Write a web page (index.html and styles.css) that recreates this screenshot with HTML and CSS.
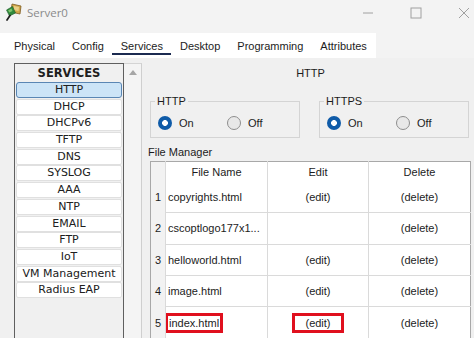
FILE: index.html
```html
<!DOCTYPE html>
<html lang="en">
<head>
<meta charset="utf-8">
<title>Server0</title>
<link rel="stylesheet" href="styles.css">
</head>
<body>
<div class="window">
  <header class="titlebar">
    <svg class="appicon" width="18" height="18" viewBox="0 0 18 18" aria-hidden="true">
      <polygon points="7,1 16,3 15,11 6,9" fill="#d1a74a" stroke="#7d5b1f" stroke-width="0.8"/>
      <polygon points="9,3 14,4 13.5,8 8.5,7" fill="#e9cf86"/>
      <polygon points="1.5,7 7.5,3.5 10.5,10 4.5,13" fill="#2f8a3c" stroke="#1d5a26" stroke-width="0.6"/>
      <polygon points="3,7.5 6.5,5.5 7.5,8 4.5,9.5" fill="#7cc36c"/>
      <line x1="5" y1="12.5" x2="2" y2="17" stroke="#1e1e1e" stroke-width="1.7" stroke-linecap="round"/>
    </svg>
    <span class="title">Server0</span>
    <div class="controls">
      <svg width="12" height="12" viewBox="0 0 12 12" aria-hidden="true"><line x1="1" y1="6" x2="11" y2="6" stroke="#a0a0a0" stroke-width="1"/></svg>
      <svg width="12" height="12" viewBox="0 0 12 12" aria-hidden="true"><rect x="1" y="1" width="10" height="10" fill="none" stroke="#a0a0a0" stroke-width="1"/></svg>
      <svg width="12" height="12" viewBox="0 0 12 12" aria-hidden="true"><path d="M1 1 L11 11 M11 1 L1 11" stroke="#a0a0a0" stroke-width="1"/></svg>
    </div>
  </header>

  <div class="tabrow">
    <nav class="tabs">
      <span class="tab">Physical</span>
      <span class="tab">Config</span>
      <span class="tab active">Services</span>
      <span class="tab">Desktop</span>
      <span class="tab">Programming</span>
      <span class="tab">Attributes</span>
    </nav>
  </div>

  <main class="main">
    <aside class="sidebar">
      <div class="listbox">
        <div class="list-head">SERVICES</div>
        <ul class="svc-list">
          <li class="svc selected">HTTP</li>
          <li class="svc">DHCP</li>
          <li class="svc">DHCPv6</li>
          <li class="svc">TFTP</li>
          <li class="svc">DNS</li>
          <li class="svc">SYSLOG</li>
          <li class="svc">AAA</li>
          <li class="svc">NTP</li>
          <li class="svc">EMAIL</li>
          <li class="svc">FTP</li>
          <li class="svc">IoT</li>
          <li class="svc">VM Management</li>
          <li class="svc">Radius EAP</li>
        </ul>
      </div>
      <div class="scrollbar"><span class="arrow-up"></span></div>
    </aside>

    <section class="panel">
      <div class="panel-title">HTTP</div>
      <div class="groups">
        <fieldset class="group">
          <legend>HTTP</legend>
          <div class="radios">
            <span class="radio"><span class="dot on"></span>On</span>
            <span class="radio"><span class="dot"></span>Off</span>
          </div>
        </fieldset>
        <fieldset class="group">
          <legend>HTTPS</legend>
          <div class="radios">
            <span class="radio"><span class="dot on"></span>On</span>
            <span class="radio"><span class="dot"></span>Off</span>
          </div>
        </fieldset>
      </div>
      <div class="fm-label">File Manager</div>
      <table class="files">
        <colgroup>
          <col class="c-num"><col class="c-name"><col class="c-edit"><col class="c-del">
        </colgroup>
        <thead>
          <tr><th class="num"></th><th>File Name</th><th>Edit</th><th>Delete</th></tr>
        </thead>
        <tbody>
          <tr><td class="num">1</td><td class="name">copyrights.html</td><td>(edit)</td><td>(delete)</td></tr>
          <tr><td class="num">2</td><td class="name">cscoptlogo177x1...</td><td></td><td>(delete)</td></tr>
          <tr><td class="num">3</td><td class="name">helloworld.html</td><td>(edit)</td><td>(delete)</td></tr>
          <tr><td class="num">4</td><td class="name">image.html</td><td>(edit)</td><td>(delete)</td></tr>
          <tr class="last"><td class="num">5</td><td class="name"><span class="mark mark-name">index.html</span></td><td><span class="mark mark-edit">(edit)</span></td><td>(delete)</td></tr>
        </tbody>
      </table>
    </section>
  </main>
</div>
</body>
</html>
```

FILE: styles.css
```css
* { box-sizing: border-box; }

html, body {
  margin: 0;
  padding: 0;
}

body {
  width: 474px;
  height: 338px;
  overflow: hidden;
  background: #f0f0f0;
  color: #1c1c1c;
  font-family: "Liberation Sans", Arial, sans-serif;
  font-size: 11px;
}

.window {
  width: 474px;
  height: 338px;
  display: flex;
  flex-direction: column;
}

/* title bar */
.titlebar {
  height: 33px;
  flex: none;
  background: #f3f3f3;
  display: flex;
  align-items: flex-start;
}

.appicon {
  margin: 3px 0 0 5px;
  flex: none;
}

.title {
  margin: 5px 0 0 4px;
  font-family: "Open Sans", "Noto Sans", sans-serif;
  font-size: 11.5px;
  line-height: 16px;
  color: #8a8a8a;
}

.controls {
  margin-left: auto;
  display: flex;
  gap: 36px;
  padding: 7px 4px 0 0;
}

/* tabs */
.tabrow {
  height: 25px;
  flex: none;
  background: #f3f3f3;
}

.tabs {
  width: 376px;
  height: 25px;
  background: #ffffff;
  display: flex;
  padding-left: 5.5px;
}

.tab {
  padding: 2px 8.5px 0;
  line-height: 23px;
  font-size: 11px;
  color: #1c1c1c;
}

.tab.active {
  background: linear-gradient(#1b2a50, #1b2a50) no-repeat 0 20px / 100% 2px;
}

/* main area */
.main {
  flex: 1;
  display: flex;
  padding-top: 5px;
  min-height: 0;
}

.sidebar {
  margin-left: 14px;
  display: flex;
  flex: none;
}

.listbox {
  width: 110px;
  border: 1px solid #5f5f5f;
  border-bottom: none;
  background: #f0f0f0;
}

.list-head {
  height: 18px;
  line-height: 19px;
  text-align: center;
  font-family: "DejaVu Sans", Verdana, sans-serif;
  font-weight: bold;
  font-size: 11.5px;
  color: #202020;
}

.svc-list {
  list-style: none;
  margin: 0;
  padding: 0 1px;
}

.svc {
  height: 16px;
  margin-bottom: 0.7px;
  line-height: 14px;
  text-align: center;
  font-family: "DejaVu Sans", Verdana, sans-serif;
  font-size: 11px;
  color: #202020;
  background: #ffffff;
  border: 1px solid #e0e0e0;
  border-radius: 2px;
  white-space: nowrap;
}

.svc.selected {
  background: #cce4f7;
  border-color: #5a86b4;
  border-radius: 3px;
}

.scrollbar {
  width: 18px;
  background: #f4f4f4;
  border-top: 1px solid #d4d4d4;
  border-right: 1px solid #cfcfcf;
  display: flex;
  justify-content: center;
  padding-top: 6px;
}

.arrow-up {
  width: 0;
  height: 0;
  border-left: 4px solid transparent;
  border-right: 4px solid transparent;
  border-bottom: 5px solid #a6a6a6;
}

/* right panel */
.panel {
  flex: 1;
  padding: 0 4px 0 8px;
  display: flex;
  flex-direction: column;
}

.panel-title {
  height: 20px;
  line-height: 20px;
  text-align: center;
}

.groups {
  display: flex;
  gap: 19px;
}

.group {
  width: 150px;
  height: 43px;
  margin: 12px 0 0;
  padding: 0 0 0 4px;
  border: 1px solid #d4d4d4;
  min-width: 0;
}

.group legend {
  padding: 0 2px;
  line-height: 13px;
  font-size: 11px;
}

.radios {
  display: flex;
  align-items: center;
  height: 14px;
  margin-top: 8px;
  padding-left: 3px;
}

.radio {
  width: 69px;
  display: flex;
  align-items: center;
  line-height: 14px;
}

.dot {
  width: 14px;
  height: 14px;
  border-radius: 50%;
  margin-right: 7px;
  background: #e8e8e8;
  border: 1px solid #8e8e8e;
  flex: none;
}

.dot.on {
  border: none;
  background: radial-gradient(circle, #ffffff 0 2.6px, #0f5ba8 3.2px);
}

.fm-label {
  margin: 8px 0 0 -2px;
  line-height: 13px;
}

.files {
  margin-top: 2px;
  width: 320px;
  table-layout: fixed;
  border-collapse: collapse;
  border: 1px solid #a8a8a8;
  background: #ffffff;
  font-size: 11px;
}

.c-num { width: 15px; }
.c-name { width: 102px; }
.c-edit { width: 101px; }
.c-del { width: 102px; }

.files th,
.files td {
  padding: 0;
  text-align: center;
  font-weight: normal;
  border-left: 1px solid #dadada;
  white-space: nowrap;
  overflow: hidden;
}

.files th {
  height: 20px;
}

.files td {
  height: 31.3px;
  border-top: 1px solid #dadada;
}

.files tbody tr:first-child td {
  border-top: none;
}

.files .num {
  background: #f2f2f2;
  border-left: none;
  border-top: none;
}

.files td.name {
  text-align: left;
  padding-left: 2px;
}

.files tr.last td {
  height: 33px;
}

.mark {
  display: inline-block;
  border: 3px solid #e0101e;
  line-height: 14px;
}

.mark-name {
  margin-left: -3px;
  padding: 0 1px 0 1px;
}

.mark-edit {
  padding: 0 10px;
}
```
